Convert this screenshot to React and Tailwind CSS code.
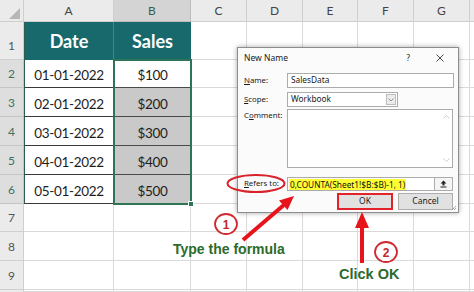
import React from 'react';

const rows = [
  { n: 1, a: 'Date', b: 'Sales' },
  { n: 2, a: '01-01-2022', b: '$100' },
  { n: 3, a: '02-01-2022', b: '$200' },
  { n: 4, a: '03-01-2022', b: '$300' },
  { n: 5, a: '04-01-2022', b: '$400' },
  { n: 6, a: '05-01-2022', b: '$500' },
  { n: 7 },
  { n: 8 },
  { n: 9 },
  { n: 10 },
];

const letters = ['C', 'D', 'E', 'F', 'G'];

function ColHeaders() {
  return (
    <>
      <div className="relative bg-[#ebebeb] border-r border-b border-[#cfcfcf]">
        <svg className="absolute left-0 top-0" width="24" height="22">
          <polygon points="20,8 20,19 9,19" fill="#b7b7b7" />
        </svg>
      </div>
      <div className="flex items-center justify-center bg-[#ebebeb] border-r border-b border-[#cfcfcf] text-[12px] text-[#444]">A</div>
      <div className="flex items-center justify-center bg-[#d4d4d4] border-r border-b border-[#bdbdbd] text-[12px] text-[#3b5d4e]">B</div>
      {letters.map((l) => (
        <div key={l} className="flex items-center justify-center bg-[#ebebeb] border-r border-b border-[#cfcfcf] text-[12px] text-[#444]">
          {l}
        </div>
      ))}
      <div className="bg-[#ebebeb] border-b border-[#cfcfcf]" />
    </>
  );
}

function Row({ r }) {
  const sel = r.n >= 2 && r.n <= 6;
  const head = r.n === 1;
  const data = r.n >= 2 && r.n <= 6;
  return (
    <>
      <div
        className={
          sel
            ? 'flex items-end justify-center pb-[4px] bg-[#dedede] border-r border-b border-[#c4c4c4] text-[12px] text-[#42705d] overflow-hidden'
            : 'flex items-end justify-center pb-[4px] bg-[#ebebeb] border-r border-b border-[#cfcfcf] text-[12px] text-[#555] overflow-hidden'
        }
      >
        {r.n < 10 ? r.n : ''}
      </div>
      {head && (
        <>
          <div className="flex items-center justify-center bg-[#17696b] border-l border-l-[#2c5e52] border-r border-r-[#3f8787] text-[18px] font-bold text-white">
            {r.a}
          </div>
          <div className="flex items-center justify-center bg-[#17696b] text-[18px] font-bold text-white">{r.b}</div>
        </>
      )}
      {data && (
        <>
          <div className="flex items-end justify-center pb-[2px] border-l border-l-[#2c5e52] border-r border-r-[#2c5e52] border-b border-b-[#3a3a3a] text-[13.5px] tracking-[-0.3px] text-[#1d1d1d]">
            {r.a}
          </div>
          <div
            className={
              r.n === 2
                ? 'flex items-end justify-center pb-[2px] bg-white border-b border-b-[#4a4a4a] text-[13.5px] tracking-[-0.3px] text-[#1d1d1d]'
                : 'flex items-end justify-center pb-[2px] bg-[#c9c9c9] border-b border-b-[#4a4a4a] text-[13.5px] tracking-[-0.3px] text-[#1d1d1d]'
            }
          >
            {r.b}
          </div>
        </>
      )}
      {!head && !data && (
        <>
          <div className="border-r border-b border-[#dadada]" />
          <div className="border-r border-b border-[#dadada]" />
        </>
      )}
      {letters.map((l) => (
        <div key={l} className="border-r border-b border-[#dadada]" />
      ))}
      <div className="border-b border-[#dadada]" />
    </>
  );
}

function Dialog() {
  return (
    <div className="absolute left-[237px] top-[47px] w-[222px] h-[166px] bg-[#fbfbfb] border border-[#8d8d8d] shadow-[0_0_5px_rgba(0,0,0,0.35)] font-['Noto_Sans',sans-serif] text-[#1a1a1a]">
      <div className="flex h-[20px] items-center pl-[6px] pr-[14px]">
        <span className="text-[8.5px]">New Name</span>
        <span className="ml-auto mr-[26px] text-[8px]">?</span>
        <svg width="8" height="8" viewBox="0 0 8 8">
          <path d="M0.5 0.5 L7.5 7.5 M7.5 0.5 L0.5 7.5" stroke="#333" strokeWidth="0.9" />
        </svg>
      </div>
      <div className="flex flex-col pl-[6px] pr-[5px] text-[8.3px]">
        <div className="mt-[5px] flex h-[15px] items-center">
          <span className="w-[43px] text-[7.8px]"><u>N</u>ame:</span>
          <div className="flex h-full flex-1 items-center border border-[#ababab] bg-white px-[3px] -mr-[1px]">SalesData</div>
        </div>
        <div className="mt-[4px] flex h-[15px] items-center">
          <span className="w-[43px] text-[7.8px]"><u>S</u>cope:</span>
          <div className="flex h-full w-[111px] items-center border border-[#ababab] bg-white pl-[3px]">
            <span>Workbook</span>
            <div className="ml-auto mr-[1px] flex h-[11px] w-[10px] items-center justify-center border border-[#bdbdbd] bg-[#ececec]">
              <svg width="6" height="4" viewBox="0 0 6 4">
                <path d="M0.5 0.5 L3 3 L5.5 0.5" fill="none" stroke="#777" strokeWidth="0.8" />
              </svg>
            </div>
          </div>
        </div>
        <div className="mt-[2px] flex h-[59px]">
          <span className="w-[43px] pt-[1px] text-[7.8px]">C<u>o</u>mment:</span>
          <div className="flex flex-1 flex-col items-end justify-between border border-[#ababab] bg-white pr-[2px] py-[5px]">
            <svg width="7" height="4" viewBox="0 0 7 4">
              <path d="M0.5 3.5 L3.5 0.5 L6.5 3.5" fill="none" stroke="#c3c3c3" strokeWidth="0.8" />
            </svg>
            <svg width="7" height="4" viewBox="0 0 7 4">
              <path d="M0.5 0.5 L3.5 3.5 L6.5 0.5" fill="none" stroke="#c3c3c3" strokeWidth="0.8" />
            </svg>
          </div>
        </div>
        <div className="mt-[9px] flex h-[14px] items-center">
          <span className="w-[43px] whitespace-nowrap text-[7.8px]"><u>R</u>efers to:</span>
          <div className="flex h-full flex-1 items-center border border-[#ababab] bg-white pl-[1px]">
            <span className="bg-[#ffff33] px-[1px] py-[1px] text-[8.3px] leading-[9px] text-[#111]">0,COUNTA(Sheet1!$B:$B)-1, 1)</span>
          </div>
          <div className="flex h-full w-[18px] items-center justify-center border border-l-0 border-[#ababab] bg-[#f4f4f4]">
            <svg width="7" height="8" viewBox="0 0 7 8">
              <path d="M3.5 0.5 L6.5 3.5 L4.5 3.5 L4.5 5.5 L2.5 5.5 L2.5 3.5 L0.5 3.5 Z" fill="#222" />
              <rect x="0.5" y="6.5" width="6" height="1" fill="#222" />
            </svg>
          </div>
        </div>
        <div className="mt-[2px] flex h-[17px] justify-end gap-[5px]">
          <div className="flex w-[56px] items-center justify-center border-2 border-[#e3222a] bg-[#e1e1e1] text-[8.5px]">OK</div>
          <div className="flex w-[55px] items-center justify-center border border-[#adadad] bg-[#e1e1e1] text-[8.5px]">Cancel</div>
        </div>
      </div>
      <svg className="absolute bottom-[1px] right-[1px]" width="6" height="6" viewBox="0 0 6 6">
        <path d="M5 1 L1 5 M5 3 L3 5" stroke="#9a9a9a" strokeWidth="0.8" />
      </svg>
    </div>
  );
}

function Annotations() {
  return (
    <>
      <svg className="pointer-events-none absolute left-0 top-0" width="474" height="292">
        <ellipse cx="256" cy="183.5" rx="28.5" ry="8.5" fill="none" stroke="#d9232b" strokeWidth="2" />
        <line x1="243" y1="240" x2="285" y2="204" stroke="#e8141c" strokeWidth="4" />
        <polygon points="294,196 287.5,210 279,200.5" fill="#e8141c" />
        <line x1="362" y1="263" x2="362" y2="224" stroke="#e8141c" strokeWidth="4" />
        <polygon points="362,212 369,228 355,228" fill="#e8141c" />
        <ellipse cx="226" cy="224" rx="11" ry="10" fill="#fff" stroke="#cf2a30" strokeWidth="1.8" />
        <text x="226" y="228.5" textAnchor="middle" fontSize="12" fontWeight="bold" fill="#c4252b" fontFamily="Liberation Sans, sans-serif">1</text>
        <ellipse cx="386" cy="252" rx="11" ry="10" fill="#fff" stroke="#cf2a30" strokeWidth="1.8" />
        <text x="386" y="256.5" textAnchor="middle" fontSize="12" fontWeight="bold" fill="#c4252b" fontFamily="Liberation Sans, sans-serif">2</text>
      </svg>
      <span className="absolute left-[173px] top-[242px] text-[14px] font-bold leading-none text-[#2b6b2b] font-['Liberation_Sans',sans-serif]">
        Type the formula
      </span>
      <span className="absolute left-[339px] top-[267px] text-[14.5px] font-bold leading-none text-[#2b6b2b] font-['Liberation_Sans',sans-serif]">
        Click OK
      </span>
    </>
  );
}

export default function App() {
  return (
    <div className="relative h-[292px] w-[474px] overflow-hidden bg-white font-['Lato',sans-serif]">
      <div className="grid grid-cols-[24px_90px_77px_56px_56px_55px_56px_56px_4px] grid-rows-[22px_38px_28px_29px_29px_29px_29px_28px_29px_29px_2px]">
        <ColHeaders />
        {rows.map((r) => (
          <Row key={r.n} r={r} />
        ))}
      </div>
      <div className="absolute left-[113px] top-[59px] h-[146px] w-[79px] border-2 border-[#2e7457]" />
      <div className="absolute left-[188px] top-[201px] h-[6px] w-[6px] border border-white bg-[#2e7457]" />
      <Dialog />
      <Annotations />
    </div>
  );
}
